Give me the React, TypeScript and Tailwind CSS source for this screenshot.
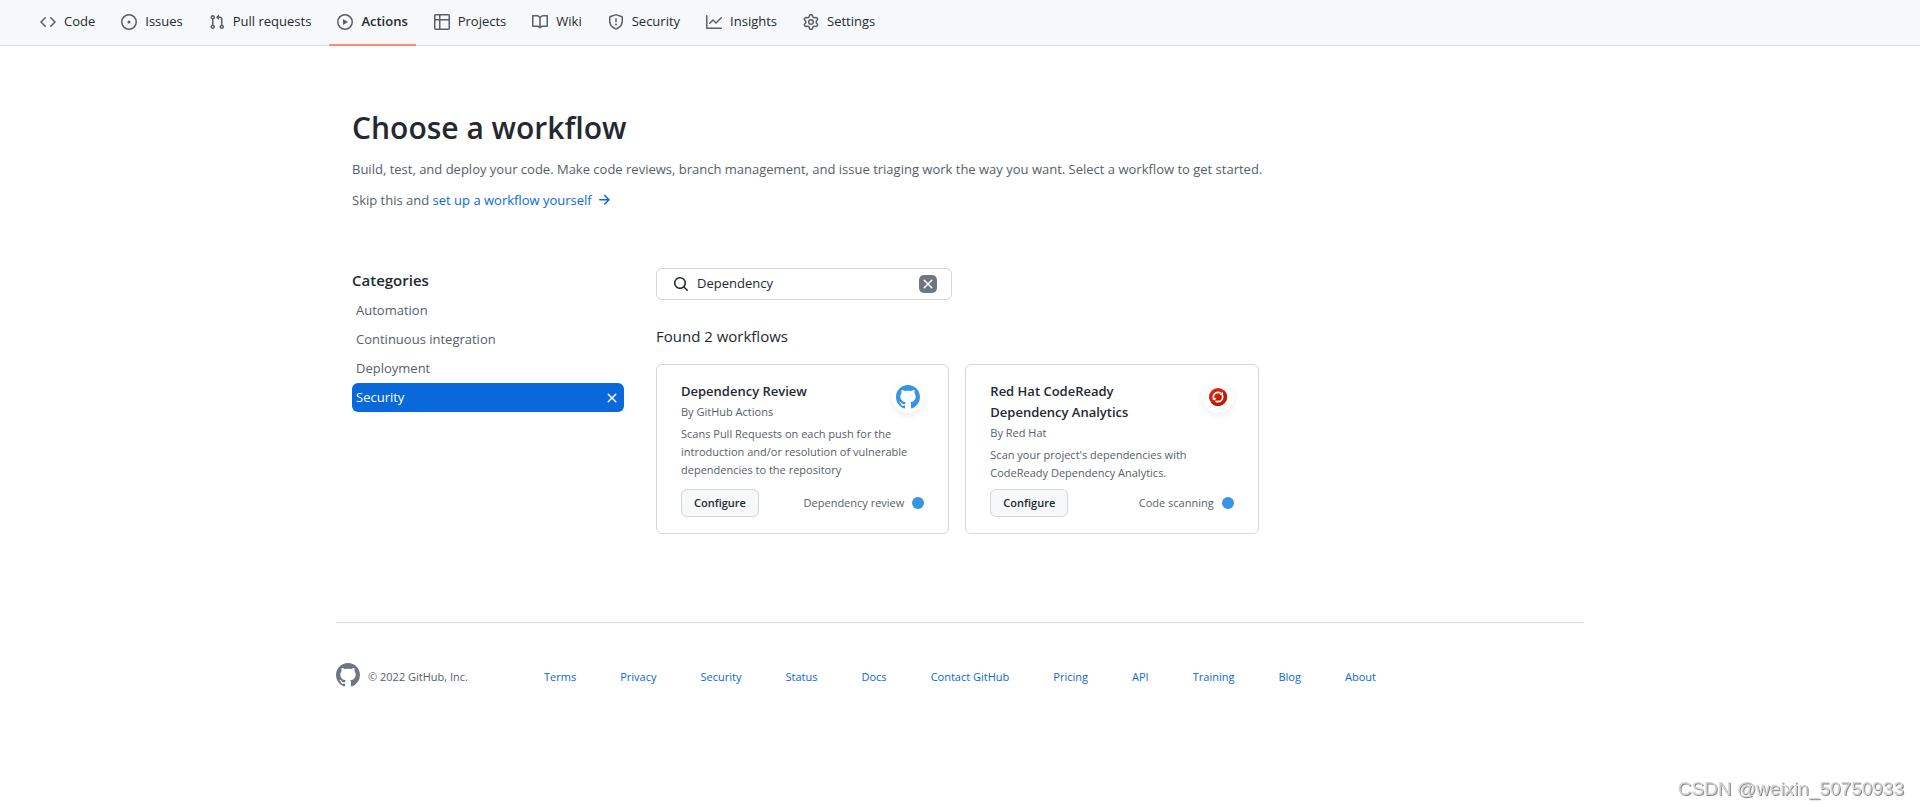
import { useState } from 'react'
import clsx from 'clsx'

const ICONS = {
  code: 'M4.72 3.22a.75.75 0 011.06 1.06L2.06 8l3.72 3.72a.75.75 0 11-1.06 1.06L.47 8.53a.75.75 0 010-1.06l4.25-4.25zm6.56 0a.75.75 0 10-1.06 1.06L13.94 8l-3.72 3.72a.75.75 0 101.06 1.06l4.25-4.25a.75.75 0 000-1.06l-4.25-4.25z',
  issue: 'M8 9.5a1.5 1.5 0 100-3 1.5 1.5 0 000 3zM8 0a8 8 0 100 16A8 8 0 008 0zM1.5 8a6.5 6.5 0 1113 0 6.5 6.5 0 01-13 0z',
  pull: 'M7.177 3.073L9.573.677A.25.25 0 0110 .854v4.792a.25.25 0 01-.427.177L7.177 3.427a.25.25 0 010-.354zM3.75 2.5a.75.75 0 100 1.5.75.75 0 000-1.5zm-2.25.75a2.25 2.25 0 113 2.122v5.256a2.251 2.251 0 11-1.5 0V5.372A2.25 2.25 0 011.5 3.25zM11 2.5h-1V4h1a1 1 0 011 1v5.628a2.251 2.251 0 101.5 0V5A2.5 2.5 0 0011 2.5zm1 10.25a.75.75 0 111.5 0 .75.75 0 01-1.5 0zM3.75 12a.75.75 0 100 1.5.75.75 0 000-1.5z',
  play: 'M1.5 8a6.5 6.5 0 1113 0 6.5 6.5 0 01-13 0zM8 0a8 8 0 100 16A8 8 0 008 0zM6.379 5.227A.25.25 0 006 5.442v5.117a.25.25 0 00.379.214l4.264-2.559a.25.25 0 000-.428L6.379 5.227z',
  table: 'M0 1.75C0 .784.784 0 1.75 0h12.5C15.216 0 16 .784 16 1.75v3.585a.746.746 0 010 .83v8.085A1.75 1.75 0 0114.25 16H6.309a.748.748 0 01-1.118 0H1.75A1.75 1.75 0 010 14.25V6.165a.746.746 0 010-.83V1.75zM1.5 6.5v7.75c0 .138.112.25.25.25H5v-8H1.5zM5 5H1.5V1.75a.25.25 0 01.25-.25H5V5zm1.5 1.5v8h7.75a.25.25 0 00.25-.25V6.5h-8zm8-1.5h-8V1.5h7.75a.25.25 0 01.25.25V5z',
  book: 'M0 1.75A.75.75 0 01.75 1h4.253c1.227 0 2.317.59 3 1.501A3.744 3.744 0 0111.006 1h4.245a.75.75 0 01.75.75v10.5a.75.75 0 01-.75.75h-4.507a2.25 2.25 0 00-1.591.659l-.622.621a.75.75 0 01-1.06 0l-.622-.621A2.25 2.25 0 005.258 13H.75a.75.75 0 01-.75-.75V1.75zm8.755 3a2.25 2.25 0 012.25-2.25H14.5v9h-3.757c-.71 0-1.4.201-1.992.572l.004-7.322zm-1.504 7.324l.004-5.073-.002-2.253A2.25 2.25 0 005.003 2.5H1.5v9h3.757a3.75 3.75 0 011.994.574z',
  shield: 'M7.467.133a1.75 1.75 0 011.066 0l5.25 1.68A1.75 1.75 0 0115 3.48V7c0 1.566-.32 3.182-1.303 4.682-.983 1.498-2.585 2.813-5.032 3.855a1.7 1.7 0 01-1.33 0c-2.447-1.042-4.049-2.357-5.032-3.855C1.32 10.182 1 8.566 1 7V3.48a1.75 1.75 0 011.217-1.667l5.25-1.68zm.61 1.429a.25.25 0 00-.153 0l-5.25 1.68a.25.25 0 00-.174.238V7c0 1.358.275 2.666 1.057 3.86.784 1.194 2.121 2.34 4.366 3.297a.2.2 0 00.154 0c2.245-.956 3.582-2.104 4.366-3.298C13.225 9.666 13.5 8.36 13.5 7V3.48a.25.25 0 00-.174-.237l-5.25-1.68zM9 10.5a1 1 0 11-2 0 1 1 0 012 0zm-.25-5.75a.75.75 0 10-1.5 0v3a.75.75 0 001.5 0v-3z',
  graph: 'M1.5 1.75a.75.75 0 00-1.5 0v12.5c0 .414.336.75.75.75h14.5a.75.75 0 000-1.5H1.5V1.75zm14.28 2.53a.75.75 0 00-1.06-1.06L10 7.94 7.53 5.47a.75.75 0 00-1.06 0L3.22 8.72a.75.75 0 001.06 1.06L7 7.06l2.47 2.47a.75.75 0 001.06 0l5.25-5.25z',
  gear: 'M7.429 1.525a6.593 6.593 0 011.142 0c.036.003.108.036.137.146l.289 1.105c.147.56.55.967.997 1.189.174.086.341.183.501.29.417.278.97.423 1.53.27l1.102-.303c.11-.03.175.016.195.046.219.31.41.641.573.989.014.031.022.11-.059.19l-.815.806c-.411.406-.562.957-.53 1.456a4.588 4.588 0 010 .582c-.032.499.119 1.05.53 1.456l.815.806c.08.08.073.159.059.19a6.494 6.494 0 01-.573.99c-.02.029-.086.074-.195.045l-1.103-.303c-.559-.153-1.112-.008-1.529.27-.16.107-.327.204-.5.29-.449.222-.851.628-.998 1.189l-.289 1.105c-.029.11-.101.143-.137.146a6.613 6.613 0 01-1.142 0c-.036-.003-.108-.037-.137-.146l-.289-1.105c-.147-.56-.55-.967-.997-1.189a4.502 4.502 0 01-.501-.29c-.417-.278-.97-.423-1.53-.27l-1.102.303c-.11.03-.175-.016-.195-.046a6.492 6.492 0 01-.573-.989c-.014-.031-.022-.11.059-.19l.815-.806c.411-.406.562-.957.53-1.456a4.587 4.587 0 010-.582c.032-.499-.119-1.05-.53-1.456l-.815-.806c-.08-.08-.073-.159-.059-.19a6.44 6.44 0 01.573-.99c.02-.029.086-.075.195-.045l1.103.303c.559.153 1.112.008 1.529-.27.16-.107.327-.204.5-.29.449-.222.851-.628.998-1.189l.289-1.105c.029-.11.101-.143.137-.146zM8 0c-.236 0-.47.01-.701.03-.743.065-1.29.615-1.458 1.261l-.29 1.106c-.017.066-.078.158-.211.224a5.994 5.994 0 00-.668.386c-.123.082-.233.09-.3.071L3.27 2.776c-.644-.177-1.392.02-1.82.63a7.977 7.977 0 00-.704 1.217c-.315.675-.111 1.422.363 1.891l.815.806c.05.048.098.147.088.294a6.084 6.084 0 000 .772c.01.147-.038.246-.088.294l-.815.806c-.474.469-.678 1.216-.363 1.891.2.428.436.835.704 1.218.428.609 1.176.806 1.82.63l1.103-.303c.066-.019.176-.011.299.071.213.143.436.272.668.386.133.066.194.158.212.224l.289 1.106c.169.646.715 1.196 1.458 1.26a8.094 8.094 0 001.402 0c.743-.064 1.29-.614 1.458-1.26l.29-1.106c.017-.066.078-.158.211-.224a5.98 5.98 0 00.668-.386c.123-.082.233-.09.3-.071l1.102.302c.644.177 1.392-.02 1.82-.63.268-.382.505-.789.704-1.217.315-.675.111-1.422-.364-1.891l-.814-.806c-.05-.048-.098-.147-.088-.294a6.1 6.1 0 000-.772c-.01-.147.039-.246.088-.294l.814-.806c.475-.469.679-1.216.364-1.891a7.992 7.992 0 00-.704-1.218c-.428-.609-1.176-.806-1.82-.63l-1.103.303c-.066.019-.176.011-.299-.071a5.991 5.991 0 00-.668-.386c-.133-.066-.194-.158-.212-.224L10.16 1.29C9.99.645 9.444.095 8.701.031A8.094 8.094 0 008 0zm1.5 8a1.5 1.5 0 11-3 0 1.5 1.5 0 013 0zM11 8a3 3 0 11-6 0 3 3 0 016 0z',
  github: 'M8 0C3.58 0 0 3.58 0 8c0 3.54 2.29 6.53 5.47 7.59.4.07.55-.17.55-.38 0-.19-.01-.82-.01-1.49-2.01.37-2.53-.49-2.69-.94-.09-.23-.48-.94-.82-1.13-.28-.15-.68-.52-.01-.53.63-.01 1.08.58 1.23.82.72 1.21 1.87.87 2.33.66.07-.52.28-.87.51-1.07-1.78-.2-3.64-.89-3.64-3.95 0-.87.31-1.59.82-2.15-.08-.2-.36-1.02.08-2.12 0 0 .67-.21 2.2.82.64-.18 1.32-.27 2-.27.68 0 1.36.09 2 .27 1.53-1.04 2.2-.82 2.2-.82.44 1.1.16 1.92.08 2.12.51.56.82 1.27.82 2.15 0 3.07-1.87 3.75-3.65 3.95.29.25.54.73.54 1.48 0 1.07-.01 1.93-.01 2.2 0 .21.15.46.55.38A8.013 8.013 0 0016 8c0-4.42-3.58-8-8-8z',
  search: 'M11.5 7a4.499 4.499 0 11-8.998 0A4.499 4.499 0 0111.5 7zm-.82 4.74a6 6 0 111.06-1.06l3.04 3.04a.75.75 0 11-1.06 1.06l-3.04-3.04z',
  x: 'M3.72 3.72a.75.75 0 011.06 0L8 6.94l3.22-3.22a.75.75 0 111.06 1.06L9.06 8l3.22 3.22a.75.75 0 11-1.06 1.06L8 9.06l-3.22 3.22a.75.75 0 01-1.06-1.06L6.94 8 3.72 4.78a.75.75 0 010-1.06z',
  arrow: 'M8.22 2.97a.75.75 0 011.06 0l4.25 4.25a.75.75 0 010 1.06l-4.25 4.25a.75.75 0 01-1.06-1.06l2.97-2.97H3.75a.75.75 0 010-1.5h7.44L8.22 4.03a.75.75 0 010-1.06z',
}

type IconName = keyof typeof ICONS

function Icon({ name, className = 'size-4' }: { name: IconName; className?: string }) {
  return (
    <svg viewBox="0 0 16 16" fill="currentColor" fillRule="evenodd" aria-hidden="true" className={clsx('shrink-0', className)}>
      <path d={ICONS[name]} />
    </svg>
  )
}

function CodeReadyLogo() {
  return (
    <svg viewBox="0 0 18 18" aria-hidden="true" className="size-[18px]">
      <circle cx="9" cy="9" r="9" fill="#db2108" />
      <path d="M15.4 2.6A9 9 0 012.6 15.4z" fill="#c01c06" />
      <circle cx="9" cy="9" r="4.7" fill="none" stroke="#fff" strokeWidth="1.7" strokeDasharray="12.8 1.97" strokeDashoffset="3" />
      <path d="M10.6 6.8l3.3.4.1-3.4zM3.4 11.2l3.4-1.5-.4 2.9z" fill="#fff" />
    </svg>
  )
}

const tabs: { label: string; icon: IconName }[] = [
  { label: 'Code', icon: 'code' },
  { label: 'Issues', icon: 'issue' },
  { label: 'Pull requests', icon: 'pull' },
  { label: 'Actions', icon: 'play' },
  { label: 'Projects', icon: 'table' },
  { label: 'Wiki', icon: 'book' },
  { label: 'Security', icon: 'shield' },
  { label: 'Insights', icon: 'graph' },
  { label: 'Settings', icon: 'gear' },
]

const categories = ['Automation', 'Continuous integration', 'Deployment', 'Security']

const workflows = [
  {
    title: 'Dependency Review',
    by: 'GitHub Actions',
    description: 'Scans Pull Requests on each push for the introduction and/or resolution of vulnerable dependencies to the repository',
    tag: 'Dependency review',
    logo: <Icon name="github" className="size-6 text-[#3794e4]" />,
  },
  {
    title: 'Red Hat CodeReady Dependency Analytics',
    by: 'Red Hat',
    description: "Scan your project's dependencies with CodeReady Dependency Analytics.",
    tag: 'Code scanning',
    logo: <CodeReadyLogo />,
  },
]

const footerLinks = ['Terms', 'Privacy', 'Security', 'Status', 'Docs', 'Contact GitHub', 'Pricing', 'API', 'Training', 'Blog', 'About']

function RepoNav() {
  return (
    <nav className="flex gap-2.5 border-b border-[#d8dee4] bg-[#f6f8fa] px-8">
      {tabs.map(({ label, icon }) => {
        const active = label === 'Actions'
        return (
          <a
            key={label}
            href="#"
            aria-current={active ? 'page' : undefined}
            className={clsx(
              '-mb-px flex h-[46px] items-center gap-2 border-b-2 px-2 whitespace-nowrap',
              active ? 'border-[#fd8c73] font-semibold' : 'border-transparent',
            )}
          >
            <Icon name={icon} className="size-4 text-[#57606a]" />
            {label}
          </a>
        )
      })}
    </nav>
  )
}

function WorkflowCard({ workflow }: { workflow: (typeof workflows)[number] }) {
  return (
    <article className="flex min-h-[170px] flex-col rounded-md border border-[#d0d7de] px-6 py-4">
      <div className="flex items-start justify-between gap-4">
        <div>
          <h3 className="leading-[21px] font-semibold">{workflow.title}</h3>
          <p className="mt-px text-[11px] leading-[18px] text-[#57606a]">By {workflow.by}</p>
        </div>
        <div className="flex size-8 shrink-0 items-center justify-center rounded-full bg-white shadow-[0_3px_6px_rgba(140,149,159,0.15)]">
          {workflow.logo}
        </div>
      </div>
      <p className="mt-1 mb-1.5 text-[11px] leading-[18px] text-[#57606a]">{workflow.description}</p>
      <div className="mt-auto flex items-center justify-between">
        <button className="h-7 rounded-md border border-[#d5d8da] bg-[#f6f8fa] px-3 text-[11px] font-semibold">Configure</button>
        <span className="flex items-center gap-2 text-[11px] text-[#57606a]">
          {workflow.tag}
          <span className="size-3 rounded-full bg-[#3794e4]" />
        </span>
      </div>
    </article>
  )
}

export default function App() {
  const [query, setQuery] = useState('Dependency')
  const [selected, setSelected] = useState('Security')

  return (
    <div className="min-h-screen bg-white font-['Open_Sans',sans-serif] text-[13px] text-[#24292f]">
      <RepoNav />

      <main className="mx-auto max-w-[1280px] px-8 pt-[58px]">
        <h1 className="text-[30px] leading-12 font-semibold">Choose a workflow</h1>
        <p className="mt-[7px] leading-5 text-[#57606a]">
          Build, test, and deploy your code. Make code reviews, branch management, and issue triaging work the way you want. Select a workflow to get started.
        </p>
        <p className="mt-[11px] leading-5 text-[#57606a]">
          Skip this and{' '}
          <a href="#" className="inline-flex items-center gap-1 text-[#0969da]">
            set up a workflow yourself <Icon name="arrow" />
          </a>
        </p>

        <div className="mt-[58px] flex">
          <aside className="w-1/4 pr-8">
            <h2 className="pb-1 text-[15px] leading-6 font-semibold">Categories</h2>
            <ul>
              {categories.map((category) => (
                <li key={category}>
                  <button
                    onClick={() => setSelected(category)}
                    className={clsx(
                      'flex h-[29px] w-full items-center justify-between rounded-md px-1 text-left',
                      category === selected ? 'bg-[#0969da] text-white' : 'text-[#57606a]',
                    )}
                  >
                    {category}
                    {category === selected && <Icon name="x" />}
                  </button>
                </li>
              ))}
            </ul>
          </aside>

          <section className="w-3/4">
            <div className="flex h-8 w-[296px] items-center rounded-md border border-[#d0d7de] pr-3.5 pl-4">
              <label htmlFor="workflow-search" aria-label="Search workflows">
                <Icon name="search" />
              </label>
              <input
                id="workflow-search"
                value={query}
                onChange={(e) => setQuery(e.target.value)}
                className="min-w-0 flex-1 px-2 outline-none"
              />
              <button aria-label="Clear search" onClick={() => setQuery('')} className="flex size-[18px] items-center justify-center rounded-[5px] bg-[#6e7781] text-white">
                <Icon name="x" />
              </button>
            </div>

            <h2 className="mt-6 text-[15px] leading-6">Found 2 workflows</h2>

            <div className="mt-4 grid grid-cols-3 gap-4">
              {workflows.map((workflow) => (
                <WorkflowCard key={workflow.title} workflow={workflow} />
              ))}
            </div>
          </section>
        </div>
      </main>

      <footer className="mx-auto mt-[88px] max-w-[1280px] px-4 text-[11px] leading-5 text-[#57606a]">
        <div className="flex items-end border-t border-[#d8dee4] pt-10 pb-10">
          <div className="flex w-1/6 items-end gap-2">
            <Icon name="github" className="size-6 text-[#6e7781]" />
            <span>© 2022 GitHub, Inc.</span>
          </div>
          <ul className="flex w-2/3 justify-between">
            {footerLinks.map((link) => (
              <li key={link}>
                <a href="#" className="text-[#0969da]">{link}</a>
              </li>
            ))}
          </ul>
        </div>
      </footer>

      <div className="fixed right-4 bottom-1 font-['Liberation_Sans',sans-serif] text-[19px] leading-7 text-[#d4d4d4] [text-shadow:1px_1px_0_#8a8a8a]">
        CSDN @weixin_50750933
      </div>
    </div>
  )
}
